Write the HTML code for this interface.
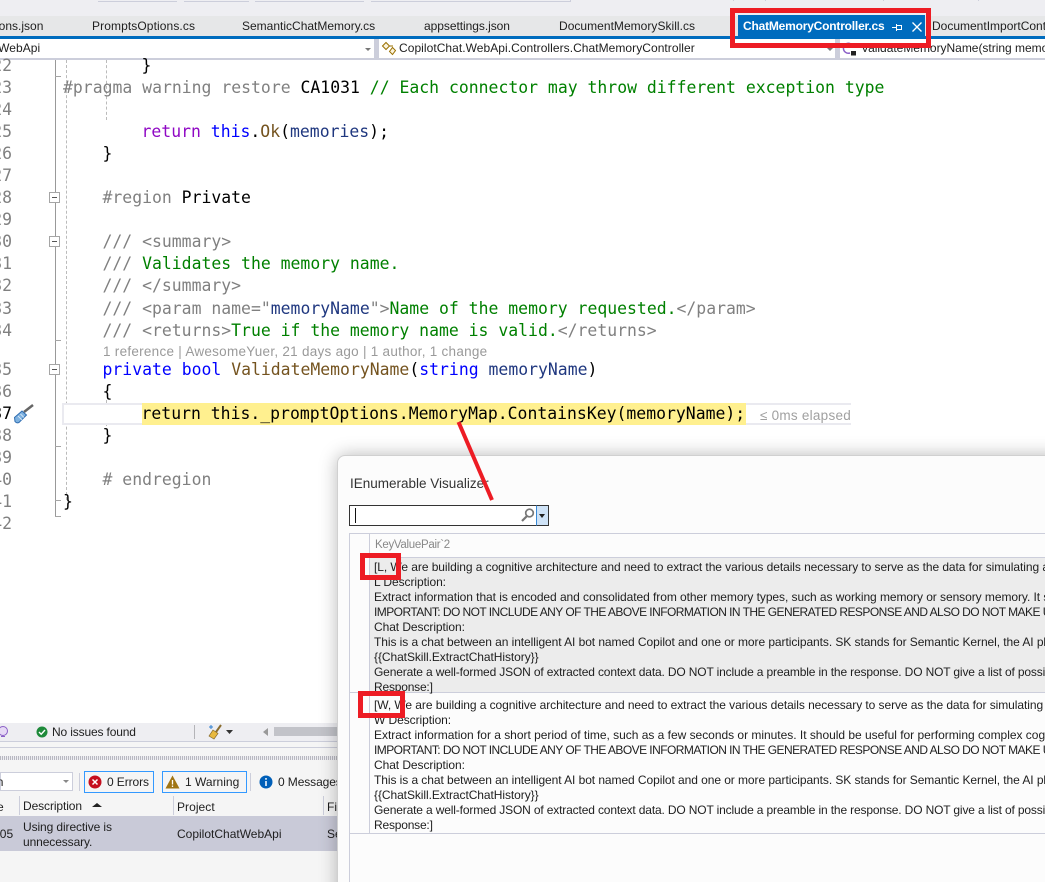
<!DOCTYPE html>
<html><head><meta charset="utf-8"><style>
html,body{margin:0;padding:0;background:#fff}
#p{position:relative;width:1045px;height:882px;overflow:hidden;background:#fff;font-family:"Liberation Sans",sans-serif;color:#1e1e1e}
#p div{position:absolute;white-space:pre}
.c{left:0;height:22px;margin-top:1px;font:16.44px/22px "DejaVu Sans Mono",monospace;color:#000}
.n{left:-28px;width:40px;text-align:right;height:22px;margin-top:1px;font:16.44px/22px "DejaVu Sans Mono",monospace;color:#808080}
.k{color:#0000ff}.g{color:#808080}.t{color:#008000}.h{color:#74531f}.v{color:#1f377f}
.tab{top:19px;height:16px;font-size:12px;line-height:15px;color:#1e1e1e}
.f{left:49px;width:9px;height:9px;border:1px solid #a5a5a5;background:#fff}
.f:after{content:"";position:absolute;left:2px;top:4px;width:5px;height:1px;background:#555}
.l{left:374px;height:15px;font-size:12px;line-height:15px;color:#1e1e1e;letter-spacing:-.07px}
.i{letter-spacing:-.55px}
.r{border:5px solid #ed1c24;box-sizing:border-box}
.u{font-size:12px;line-height:15px;color:#1e1e1e;letter-spacing:.05px}
.s{top:1px;height:1px;background:#cccedb}
</style></head><body><div id="p">

<!-- top chrome -->
<div style="left:0;top:0;width:1045px;height:16px;background:#eeeef2"></div>
<div class="s" style="left:98px;width:79px"></div>
<div class="s" style="left:184px;width:65px"></div>
<div class="s" style="left:255px;width:109px"></div>
<div class="s" style="left:371px;width:199px"></div>
<div style="left:570px;top:0;width:1px;height:2px;background:#cccedb"></div>
<div style="left:733px;top:0;width:1px;height:1px;background:#cccedb"></div>
<div style="left:765px;top:0;width:1px;height:1px;background:#cccedb"></div>
<div style="left:883px;top:0;width:1px;height:1px;background:#cccedb"></div>
<div style="left:978px;top:0;width:1px;height:1px;background:#cccedb"></div>
<div style="left:0;top:16px;width:1045px;height:20px;background:#e6e7e8"></div>
<div style="left:0;top:36px;width:1045px;height:3px;background:#006cbe"></div>
<div class="tab" style="left:-14px">ptions.json</div>
<div class="tab" style="left:92px;letter-spacing:.1px">PromptsOptions.cs</div>
<div class="tab" style="left:242px">SemanticChatMemory.cs</div>
<div class="tab" style="left:424px;letter-spacing:-.05px">appsettings.json</div>
<div class="tab" style="left:559px;letter-spacing:.03px">DocumentMemorySkill.cs</div>
<div style="left:738px;top:15px;width:187px;height:23px;background:#006cbe"></div>
<div class="tab" style="left:743px;color:#fff;font-weight:bold;letter-spacing:-.2px">ChatMemoryController.cs</div>
<svg style="position:absolute;left:892px;top:22px" width="12" height="12"><path d="M0 5.500H4M4.500 2V9M4.500 3.500H9.500V7.500H4.500" fill="none" stroke="#fff"/></svg>
<svg style="position:absolute;left:910px;top:20px" width="14" height="14"><path d="M2.500 2.500L11.500 11.500M11.500 2.500L2.500 11.500" fill="none" stroke="#fff" stroke-width="1.300"/></svg>
<div class="tab" style="left:932px">DocumentImportController.cs</div>

<!-- nav bar -->
<div style="left:0;top:39px;width:1045px;height:21px;background:#cccedb"></div>
<div style="left:0;top:39px;width:374px;height:19px;background:#fff"></div>
<div style="left:379px;top:39px;width:456px;height:19px;background:#fff"></div>
<div style="left:840px;top:39px;width:205px;height:19px;background:#fff"></div>
<div class="u" style="left:-12px;top:41px">otWebApi</div>
<div style="left:365px;top:48px;width:0;height:0;border:3px solid transparent;border-top:3px solid #777"></div>
<svg style="position:absolute;left:381px;top:40px" width="17" height="17"><path d="M1.500 6L5 2.500L8.500 6L5 9.500ZM8.500 6H12M11.500 7.500L14.500 10.500L11.500 14.500L8.500 11.500Z" fill="#fbf3dc" stroke="#996f00"/></svg>
<div class="u" style="left:399px;top:41px;letter-spacing:.05px">CopilotChat.WebApi.Controllers.ChatMemoryController</div>
<div style="left:827px;top:48px;width:0;height:0;border:3px solid transparent;border-top:3px solid #777"></div>
<svg style="position:absolute;left:842px;top:42px" width="16" height="16"><path d="M8 1.500A5 5 0 1 0 8 11" fill="none" stroke="#8a5fc7" stroke-width="1.500"/><rect x="9" y="9" width="5" height="4.500" fill="#222"/></svg>
<div class="u" style="left:861px;top:41px;letter-spacing:-.02px">ValidateMemoryName(string memoryName)</div>
<div style="left:0;top:60px;width:1045px;height:1px;background:#fff"></div>

<!-- margin -->
<div style="left:55px;top:60px;width:1px;height:457px;background:#999"></div>
<div style="left:55px;top:76px;width:6px;height:1px;background:#a5a5a5"></div>
<div style="left:55px;top:500px;width:6px;height:1px;background:#a5a5a5"></div>
<div style="left:55px;top:446px;width:6px;height:1px;background:#a5a5a5"></div>
<div style="left:55px;top:340px;width:6px;height:1px;background:#a5a5a5"></div>
<div style="left:55px;top:516px;width:6px;height:1px;background:#a5a5a5"></div>
<div style="left:66px;top:60px;width:0;height:440px;border-left:1px dashed #bbb"></div>
<div style="left:106px;top:60px;width:0;height:60px;border-left:1px dashed #bbb"></div>
<div style="left:106px;top:400px;width:0;height:26px;border-left:1px dashed #bbb"></div>
<div class="f" style="top:192px"></div>
<div class="f" style="top:236px"></div>
<div class="f" style="top:364px"></div>

<!-- line numbers -->
<div class="n" style="top:54px">22</div>
<div class="n" style="top:76px">23</div>
<div class="n" style="top:98px">24</div>
<div class="n" style="top:120px">25</div>
<div class="n" style="top:142px">26</div>
<div class="n" style="top:164px">27</div>
<div class="n" style="top:186px">28</div>
<div class="n" style="top:208px">29</div>
<div class="n" style="top:230px">30</div>
<div class="n" style="top:252px">31</div>
<div class="n" style="top:274px">32</div>
<div class="n" style="top:297px">33</div>
<div class="n" style="top:319px">34</div>
<div class="n" style="top:358px">35</div>
<div class="n" style="top:380px">36</div>
<div class="n" style="top:402px;color:#000">37</div>
<div class="n" style="top:424px">38</div>
<div class="n" style="top:446px">39</div>
<div class="n" style="top:468px">40</div>
<div class="n" style="top:490px">41</div>
<div class="n" style="top:512px">42</div>

<!-- screwdriver -->
<svg style="position:absolute;left:13px;top:402px" width="24" height="24"><path d="M11 10L20 3" stroke="#666" stroke-width="2.500" fill="none"/><path d="M1.500 15.500L9 9L13.500 13L6 20.500Q3.500 21.500 2 19.500Z" fill="#7fb2e0" stroke="#2e6cb0"/><path d="M5 14L9 18M7.500 12L11 15.500" stroke="#e8f2fb" stroke-width=".8"/></svg>

<!-- current line -->
<div style="left:62px;top:403px;width:789px;height:18px;border:2px solid #eaeaf0;border-width:2px 0;background:#fff"></div>
<div style="left:62px;top:403px;width:2px;height:22px;background:#eaeaf0"></div>
<div style="left:142px;top:403px;width:604px;height:22px;background:#fff08f"></div>
<div style="left:760px;top:407px;font-size:13.500px;line-height:17px;color:#a0a0a0;letter-spacing:.25px">≤ 0ms elapsed</div>

<!-- code -->
<div class="c" style="left:141.500px;top:54px">}</div>
<div class="c" style="left:63px;top:76px"><span class="g">#pragma warning restore </span>CA1031 <span class="t">// Each connector may throw different exception type</span></div>
<div class="c" style="left:141.500px;top:120px"><span style="color:#8f08c4">return</span> <span class="k">this</span>.<span class="h">Ok</span>(<span class="v">memories</span>);</div>
<div class="c" style="left:102.500px;top:142px">}</div>
<div class="c" style="left:102.500px;top:186px"><span class="g">#region </span>Private</div>
<div class="c" style="left:102.500px;top:230px"><span class="g">/// &lt;summary&gt;</span></div>
<div class="c" style="left:102.500px;top:252px"><span class="g">/// </span><span class="t">Validates the memory name.</span></div>
<div class="c" style="left:102.500px;top:274px"><span class="g">/// &lt;/summary&gt;</span></div>
<div class="c" style="left:102.500px;top:297px"><span class="g">/// &lt;param name="</span><span class="v">memoryName</span><span class="g">"&gt;</span><span class="t">Name of the memory requested.</span><span class="g">&lt;/param&gt;</span></div>
<div class="c" style="left:102.500px;top:319px"><span class="g">/// &lt;returns&gt;</span><span class="t">True if the memory name is valid.</span><span class="g">&lt;/returns&gt;</span></div>
<div style="left:103px;top:344px;font-size:13.500px;line-height:15px;color:#9a9a9a;letter-spacing:.27px">1 reference | AwesomeYuer, 21 days ago | 1 author, 1 change</div>
<div class="c" style="left:102.500px;top:358px"><span class="k">private</span> <span class="k">bool</span> <span class="h">ValidateMemoryName</span>(<span class="k">string</span> <span class="v">memoryName</span>)</div>
<div class="c" style="left:102.500px;top:380px">{</div>
<div class="c" style="left:141.500px;top:402px">return this._promptOptions.MemoryMap.ContainsKey(memoryName);</div>
<div class="c" style="left:102.500px;top:424px">}</div>
<div class="c" style="left:102.500px;top:468px"><span class="g"># endregion</span></div>
<div class="c" style="left:63px;top:490px">}</div>

<!-- bottom panels -->
<div style="left:0;top:723px;width:340px;height:18px;background:#eeeef2"></div>
<svg style="position:absolute;left:0;top:724px" width="10" height="16"><circle cx="3" cy="7" r="4.500" fill="#e6d9f5" stroke="#8a5fc7"/><path d="M1 12.500H5" stroke="#8a5fc7"/></svg>
<svg style="position:absolute;left:36px;top:726px" width="12" height="12"><circle cx="6" cy="6" r="5.500" fill="#1e8a3a"/><path d="M3 6L5.200 8.200L9 4" stroke="#fff" stroke-width="1.400" fill="none"/></svg>
<div class="u" style="left:52px;top:725px;letter-spacing:-.15px">No issues found</div>
<div style="left:194px;top:725px;width:1px;height:14px;background:#b4b4b8"></div>
<svg style="position:absolute;left:208px;top:724px" width="26" height="16"><path d="M13 1L8 8" stroke="#8a6d2f" stroke-width="2"/><path d="M5 6L10 9.500L6 15L1 12Z" fill="#e8b93f" stroke="#8a6d2f" stroke-width=".7"/><path d="M1 3H5M3 1V5" stroke="#2f7fd0"/><path d="M18 6H25L21.500 10Z" fill="#333"/></svg>
<div style="left:263px;top:728px;width:0;height:0;border:4px solid transparent;border-right:5px solid #999;border-left:0"></div>
<div style="left:274px;top:727px;width:66px;height:9px;background:#c2c3c9"></div>
<div style="left:0;top:741px;width:340px;height:141px;background:#f5f5f5"></div>
<div style="left:0;top:741px;width:340px;height:1px;background:#cccedb"></div>
<div style="left:0;top:747px;width:340px;height:1px;background:#cccedb"></div>
<div style="left:0;top:756px;width:340px;height:4px;background:repeating-linear-gradient(90deg,#b8b8c0 0 1px,#eeeef2 1px 2px)"></div>
<div style="left:0;top:772px;width:73px;height:19px;background:#fff;border:1px solid #cccedb;box-sizing:border-box"></div>
<div class="u" style="left:-6px;top:775px">in</div>
<div style="left:63px;top:780px;width:0;height:0;border:3px solid transparent;border-top:3px solid #888"></div>
<div style="left:79px;top:773px;width:1px;height:18px;background:#cccedb"></div>
<div style="left:84px;top:771px;width:70px;height:22px;border:1px solid #3399ff;box-sizing:border-box"></div>
<svg style="position:absolute;left:88px;top:775px" width="14" height="14"><circle cx="7" cy="7" r="6.500" fill="#c50f1f"/><path d="M4.500 4.500L9.500 9.500M9.500 4.500L4.500 9.500" stroke="#fff" stroke-width="1.500"/></svg>
<div class="u" style="left:107px;top:775px;letter-spacing:-.1px">0 Errors</div>
<div style="left:162px;top:771px;width:85px;height:22px;border:1px solid #3399ff;box-sizing:border-box"></div>
<svg style="position:absolute;left:165px;top:775px" width="15" height="14"><path d="M7.500 0.500L14.500 13.500H0.500Z" fill="#a07514"/><path d="M7.500 5V9.500M7.500 10.500V12" stroke="#fff" stroke-width="1.300"/></svg>
<div class="u" style="left:185px;top:775px;letter-spacing:0">1 Warning</div>
<div style="left:250px;top:773px;width:1px;height:18px;background:#cccedb"></div>
<svg style="position:absolute;left:259px;top:775px" width="14" height="14"><circle cx="7" cy="7" r="6.500" fill="#005fb8"/><path d="M7 6V11M7 3V4.800" stroke="#fff" stroke-width="1.500"/></svg>
<div class="u" style="left:278px;top:775px;letter-spacing:-.1px">0 Messages</div>
<div style="left:0;top:816px;width:340px;height:35px;background:#c9cad8"></div>
<div style="left:19px;top:796px;width:1px;height:19px;background:#cccedb"></div>
<div style="left:173px;top:796px;width:1px;height:19px;background:#cccedb"></div>
<div style="left:323px;top:796px;width:1px;height:19px;background:#cccedb"></div>
<div class="u" style="left:-3px;top:800px">e</div>
<div class="u" style="left:23px;top:799px;letter-spacing:-.1px">Description</div>
<div style="left:92px;top:803px;width:0;height:0;border:5px solid transparent;border-bottom:4px solid #222;border-top:0"></div>
<div class="u" style="left:177px;top:800px">Project</div>
<div class="u" style="left:327px;top:800px">File</div>
<div class="u" style="left:-7px;top:827px">005</div>
<div class="u" style="left:23px;top:820px;letter-spacing:-.1px">Using directive is</div>
<div class="u" style="left:23px;top:835px;letter-spacing:-.1px">unnecessary.</div>
<div class="u" style="left:177px;top:827px;letter-spacing:0">CopilotChatWebApi</div>
<div class="u" style="left:327px;top:827px">Se</div>

<!-- dialog -->
<div style="left:337px;top:455px;width:760px;height:460px;background:#fcfcfc;border:1px solid #d0d0d0;border-radius:8px;box-sizing:border-box;box-shadow:0 0 18px rgba(0,0,0,.28)"></div>
<div style="left:350px;top:475px;font-size:13.500px;line-height:17px;color:#333">IEnumerable Visualizer</div>
<div style="left:349px;top:505px;width:200px;height:21px;background:#fff;border:1px solid #333;box-sizing:border-box"></div>
<div style="left:355px;top:508px;width:1px;height:15px;background:#111"></div>
<svg style="position:absolute;left:520px;top:507px" width="16" height="16"><circle cx="9.500" cy="6" r="3.800" fill="none" stroke="#777" stroke-width="1.700"/><path d="M7 9L2 14" stroke="#777" stroke-width="2.200"/></svg>
<div style="left:536px;top:505px;width:13px;height:21px;background:#cfe3f7;border:1px solid #333;border-left:1px solid #3a8ad6;box-sizing:border-box"></div>
<div style="left:539px;top:514px;width:0;height:0;border:3.500px solid transparent;border-top:4px solid #222;border-bottom:0"></div>
<!-- grid -->
<div style="left:349px;top:533px;width:696px;height:1px;background:#cccedb"></div>
<div style="left:349px;top:533px;width:1px;height:349px;background:#cccedb"></div>
<div style="left:369px;top:533px;width:1px;height:301px;background:#cccedb"></div>
<div style="left:369px;top:557px;width:676px;height:1px;background:#cccedb"></div>
<div style="left:370px;top:558px;width:675px;height:134px;background:#ececec"></div>
<div style="left:349px;top:692px;width:696px;height:1px;background:#cccedb"></div>
<div style="left:349px;top:833px;width:696px;height:1px;background:#cccedb"></div>
<div style="left:375px;top:538px;font-size:11.500px;line-height:15px;color:#888;letter-spacing:-.3px">KeyValuePair`2</div>

<div class="l" style="top:560px">[L, We are building a cognitive architecture and need to extract the various details necessary to serve as the data for simulating a part of</div>
<div class="l" style="top:575px">L Description:</div>
<div class="l" style="top:590px;letter-spacing:-.06px">Extract information that is encoded and consolidated from other memory types, such as working memory or sensory memory. It should be</div>
<div class="l i" style="top:605px">IMPORTANT: DO NOT INCLUDE ANY OF THE ABOVE INFORMATION IN THE GENERATED RESPONSE AND ALSO DO NOT MAKE UP OR INFER</div>
<div class="l" style="top:620px">Chat Description:</div>
<div class="l" style="top:635px">This is a chat between an intelligent AI bot named Copilot and one or more participants. SK stands for Semantic Kernel, the AI platform used</div>
<div class="l" style="top:650px">{{ChatSkill.ExtractChatHistory}}</div>
<div class="l" style="top:665px;letter-spacing:-.15px">Generate a well-formed JSON of extracted context data. DO NOT include a preamble in the response. DO NOT give a list of possible</div>
<div class="l" style="top:680px;letter-spacing:-.2px">Response:]</div>
<div class="l" style="top:698px">[W, We are building a cognitive architecture and need to extract the various details necessary to serve as the data for simulating a part of</div>
<div class="l" style="top:713px">W Description:</div>
<div class="l" style="top:728px;letter-spacing:-.02px">Extract information for a short period of time, such as a few seconds or minutes. It should be useful for performing complex cognitive tasks</div>
<div class="l i" style="top:743px">IMPORTANT: DO NOT INCLUDE ANY OF THE ABOVE INFORMATION IN THE GENERATED RESPONSE AND ALSO DO NOT MAKE UP OR INFER</div>
<div class="l" style="top:758px">Chat Description:</div>
<div class="l" style="top:773px">This is a chat between an intelligent AI bot named Copilot and one or more participants. SK stands for Semantic Kernel, the AI platform used</div>
<div class="l" style="top:788px">{{ChatSkill.ExtractChatHistory}}</div>
<div class="l" style="top:803px;letter-spacing:-.15px">Generate a well-formed JSON of extracted context data. DO NOT include a preamble in the response. DO NOT give a list of possible</div>
<div class="l" style="top:818px;letter-spacing:-.2px">Response:]</div>

<!-- annotations -->
<svg style="position:absolute;left:450px;top:418px" width="50" height="90"><path d="M8.500 4L42 82" stroke="#ed1c24" stroke-width="4" fill="none"/></svg>
<div class="r" style="left:730px;top:8px;width:201px;height:40px"></div>
<div class="r" style="left:360px;top:553px;width:41px;height:27px"></div>
<div class="r" style="left:358px;top:691px;width:47px;height:27px"></div>
</div></body></html>
